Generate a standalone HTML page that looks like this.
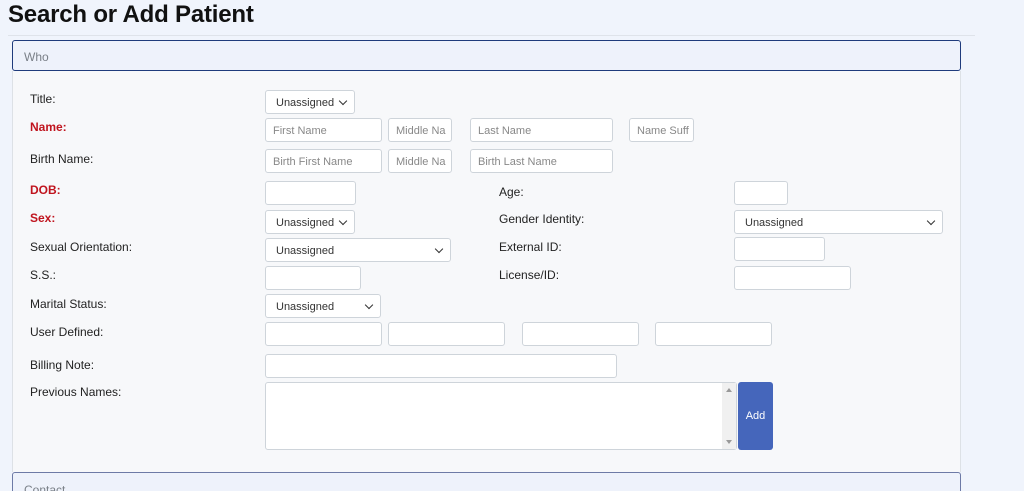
<!DOCTYPE html>
<html><head><meta charset="utf-8"><style>
*{box-sizing:border-box;margin:0;padding:0}
html,body{width:1024px;height:491px;overflow:hidden}
body{background:#f0f4fc;font-family:"Liberation Sans",sans-serif;position:relative;color:#222}
.a{position:absolute}
h1{position:absolute;left:8px;top:1px;font-size:24px;font-weight:bold;color:#111;letter-spacing:-0.2px}
.hr{left:8px;top:35px;width:967px;height:1px;background:#dfe3ea}
.hdr{left:12px;width:949px;height:31px;border:1px solid #1f3b7c;border-radius:3px;background:#eef2fb;color:#7a8088;font-size:12px;padding:9px 0 0 11px}
.body{left:12px;top:71px;width:949px;height:401px;background:#f7f8fa;border-left:1px solid #dde1e6;border-right:1px solid #dde1e6}
.l{position:absolute;left:30px;font-size:12px;color:#222}
.l2{position:absolute;left:499px;font-size:12px;color:#222}
.r{color:#c0141e;font-weight:bold}
.i{position:absolute;height:24px;background:#fff;border:1px solid #ced4da;border-radius:3px;font-size:11px;color:#888;padding:6px 0 0 7px;white-space:nowrap;overflow:hidden}
.s{color:#333;padding-left:10px}
.s:after{content:"";position:absolute;right:8px;top:7px;width:5px;height:5px;border-right:1.5px solid #333;border-bottom:1.5px solid #333;transform:rotate(45deg)}
</style></head><body>
<h1>Search or Add Patient</h1>
<div class="a hr"></div>
<div class="a hdr" style="top:40px">Who</div>
<div class="a body"></div>

<div class="l" style="top:92px">Title:</div>
<div class="i s" style="left:265px;top:90px;width:90px">Unassigned</div>

<div class="l r" style="top:120px">Name:</div>
<div class="i" style="left:265px;top:118px;width:117px">First Name</div>
<div class="i" style="left:388px;top:118px;width:64px">Middle Na</div>
<div class="i" style="left:470px;top:118px;width:143px">Last Name</div>
<div class="i" style="left:629px;top:118px;width:65px">Name Suff</div>

<div class="l" style="top:152px">Birth Name:</div>
<div class="i" style="left:265px;top:149px;width:117px">Birth First Name</div>
<div class="i" style="left:388px;top:149px;width:64px">Middle Na</div>
<div class="i" style="left:470px;top:149px;width:143px">Birth Last Name</div>

<div class="l r" style="top:183px">DOB:</div>
<div class="i" style="left:265px;top:181px;width:91px"></div>
<div class="l2" style="top:185px">Age:</div>
<div class="i" style="left:734px;top:181px;width:54px"></div>

<div class="l r" style="top:211px">Sex:</div>
<div class="i s" style="left:265px;top:210px;width:90px">Unassigned</div>
<div class="l2" style="top:212px">Gender Identity:</div>
<div class="i s" style="left:734px;top:210px;width:209px">Unassigned</div>

<div class="l" style="top:240px">Sexual Orientation:</div>
<div class="i s" style="left:265px;top:238px;width:186px">Unassigned</div>
<div class="l2" style="top:240px">External ID:</div>
<div class="i" style="left:734px;top:237px;width:91px"></div>

<div class="l" style="top:268px">S.S.:</div>
<div class="i" style="left:265px;top:266px;width:96px"></div>
<div class="l2" style="top:268px">License/ID:</div>
<div class="i" style="left:734px;top:266px;width:117px"></div>

<div class="l" style="top:297px">Marital Status:</div>
<div class="i s" style="left:265px;top:294px;width:116px">Unassigned</div>

<div class="l" style="top:325px">User Defined:</div>
<div class="i" style="left:265px;top:322px;width:117px"></div>
<div class="i" style="left:388px;top:322px;width:117px"></div>
<div class="i" style="left:522px;top:322px;width:117px"></div>
<div class="i" style="left:655px;top:322px;width:117px"></div>

<div class="l" style="top:358px">Billing Note:</div>
<div class="i" style="left:265px;top:354px;width:352px"></div>

<div class="l" style="top:385px">Previous Names:</div>
<div class="i" style="left:265px;top:382px;width:472px;height:68px;padding:0"></div>
<div class="a" style="left:722px;top:383px;width:14px;height:66px;background:#f0f0f0"></div>
<div class="a" style="left:726px;top:388px;border:3px solid transparent;border-bottom:4px solid #999;border-top:0"></div>
<div class="a" style="left:726px;top:440px;border:3px solid transparent;border-top:4px solid #999;border-bottom:0"></div>
<div class="a" style="left:738px;top:382px;width:35px;height:68px;background:#4566bb;border-radius:3px;color:#fff;font-size:11px;text-align:center;padding-top:28px">Add</div>

<div class="a hdr" style="top:472px;height:19px;border-bottom:0;border-radius:3px 3px 0 0;border-color:#6d7aa6;padding-top:10px">Contact</div>
</body></html>
